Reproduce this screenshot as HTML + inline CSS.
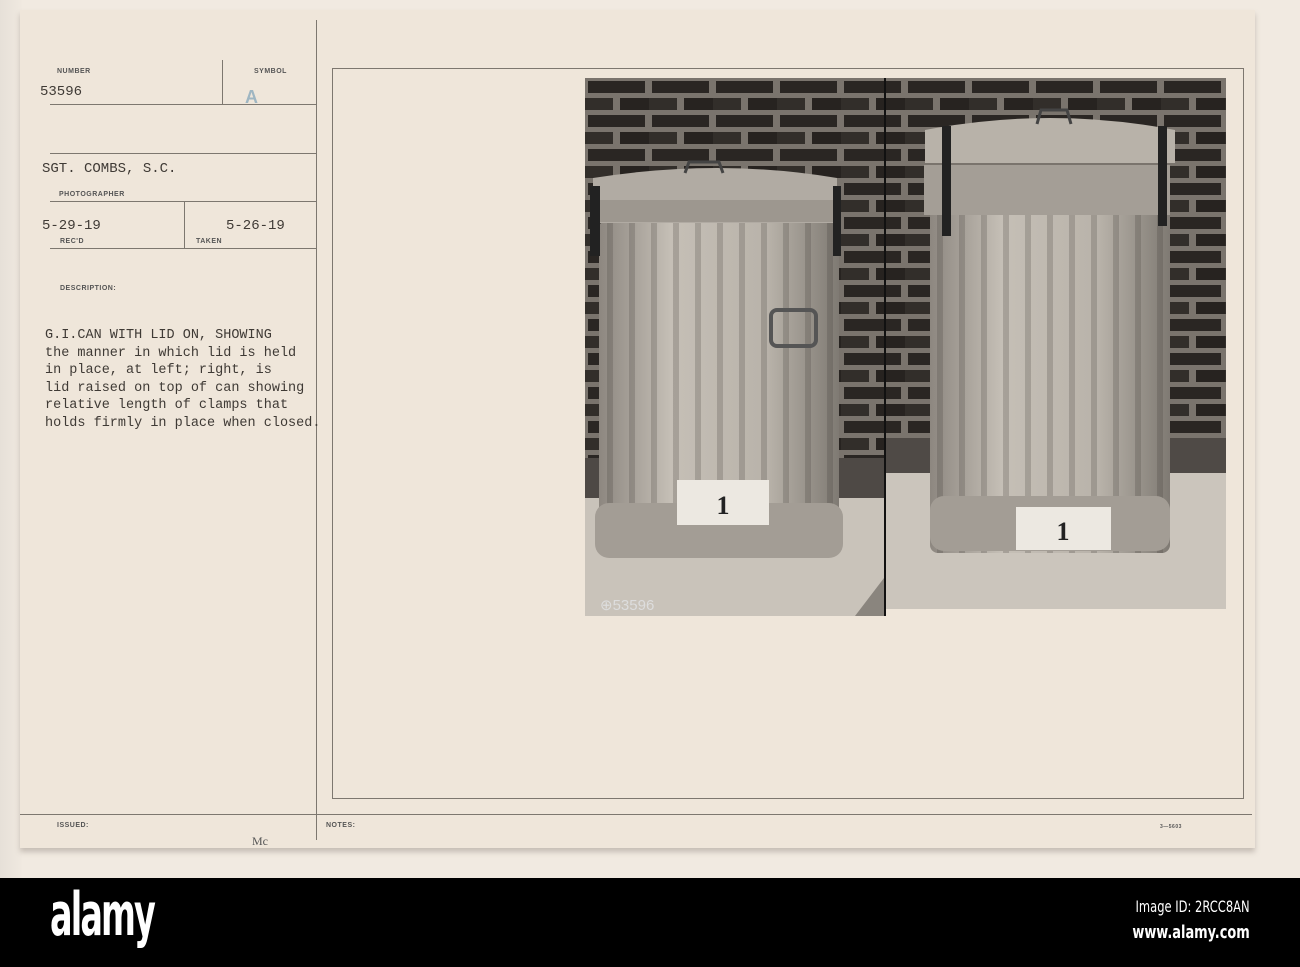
<!DOCTYPE html>
<html><head><meta charset="utf-8"><style>
body{margin:0;width:1300px;height:967px;overflow:hidden;background:#f1eae1;font-family:"Liberation Mono",monospace;color:#4a4540;position:relative}
.a{position:absolute}
.l{position:absolute;background:#7d776f}
.sm{font-family:"Liberation Sans",sans-serif;font-size:7px;font-weight:bold;letter-spacing:.5px;color:#555}
.ty{font-size:14px;color:#3f3a35}
.desc{font-size:13.5px;line-height:17.5px;color:#3f3a35;white-space:pre}
</style></head><body>
<div class="a" style="left:0;top:0;width:22px;height:878px;background:linear-gradient(90deg,#e6e0d8,#f0e9e0)"></div>
<div class="a" style="left:20px;top:10px;width:1235px;height:838px;background:#efe6da;box-shadow:0 4px 5px rgba(120,110,100,.35)"></div>
<div class="l" style="left:316px;top:20px;width:1px;height:820px"></div>
<div class="l" style="left:222px;top:60px;width:1px;height:44px"></div>
<div class="l" style="left:50px;top:104px;width:267px;height:1px"></div>
<div class="l" style="left:50px;top:153px;width:267px;height:1px"></div>
<div class="l" style="left:50px;top:201px;width:267px;height:1px"></div>
<div class="l" style="left:184px;top:202px;width:1px;height:46px"></div>
<div class="l" style="left:50px;top:248px;width:267px;height:1px"></div>
<div class="l" style="left:20px;top:814px;width:1232px;height:1px"></div>
<div class="a" style="left:332px;top:68px;width:910px;height:729px;border:1px solid #7d776f"></div>
<div class="a sm" style="left:57px;top:68px">NUMBER</div>
<div class="a ty" style="left:40px;top:84px">53596</div>
<div class="a sm" style="left:254px;top:68px">SYMBOL</div>
<div class="a" style="left:245px;top:87px;font:bold 18px 'Liberation Sans',sans-serif;color:#9fb6c2">A</div>
<div class="a ty" style="left:42px;top:161px">SGT. COMBS, S.C.</div>
<div class="a sm" style="left:59px;top:191px">PHOTOGRAPHER</div>
<div class="a ty" style="left:42px;top:218px">5-29-19</div>
<div class="a sm" style="left:60px;top:238px">REC'D</div>
<div class="a ty" style="left:226px;top:218px">5-26-19</div>
<div class="a sm" style="left:196px;top:238px">TAKEN</div>
<div class="a sm" style="left:60px;top:285px">DESCRIPTION:</div>
<div class="a desc" style="left:45px;top:327px">G.I.CAN WITH LID ON, SHOWING
the manner in which lid is held
in place, at left; right, is
lid raised on top of can showing
relative length of clamps that
holds firmly in place when closed.</div>
<div class="a sm" style="left:57px;top:822px">ISSUED:</div>
<div class="a sm" style="left:326px;top:822px">NOTES:</div>
<div class="a" style="left:252px;top:834px;font:12px 'Liberation Serif',serif;color:#555">Mc</div>
<div class="a sm" style="left:1160px;top:824px;font-size:5px">3—5603</div>
<svg class="a" style="left:585px;top:78px" width="641" height="538" viewBox="0 0 641 538">
<defs>
<pattern id="br" width="64" height="34" patternUnits="userSpaceOnUse">
<rect width="64" height="34" fill="#7a746d"/>
<rect x="3" y="3" width="57" height="12" fill="#2a2623"/>
<rect x="-29" y="20" width="57" height="12" fill="#322e2a"/>
<rect x="35" y="20" width="57" height="12" fill="#272320"/>
</pattern>
<linearGradient id="cg" x1="0" x2="1"><stop offset="0" stop-color="#8d8780"/><stop offset=".3" stop-color="#c5bfb6"/><stop offset=".7" stop-color="#b9b3aa"/><stop offset="1" stop-color="#7f7a73"/></linearGradient>
<pattern id="rib" width="22" height="10" patternUnits="userSpaceOnUse"><rect x="0" width="6" height="10" fill="rgba(60,55,50,.22)"/></pattern>
</defs>
<rect width="299" height="538" fill="url(#br)"/>
<rect x="301" width="340" height="531" fill="url(#br)"/>
<rect x="0" y="380" width="299" height="60" fill="#4e4945"/>
<rect x="0" y="420" width="299" height="118" fill="#c9c3ba"/>
<polygon points="270,538 299,500 299,538" fill="#8a857e"/>
<rect x="301" y="360" width="340" height="60" fill="#4f4a46"/>
<rect x="301" y="395" width="340" height="136" fill="#cbc5bc"/>
<rect x="299" width="2" height="538" fill="#111"/>
<rect x="14" y="142" width="240" height="335" rx="8" fill="url(#cg)"/>
<rect x="14" y="142" width="240" height="335" fill="url(#rib)"/>
<rect x="10" y="425" width="248" height="55" rx="14" fill="#a39d95"/>
<path d="M8,100 Q134,80 252,100 L252,145 L8,145Z" fill="#b1aba3"/>
<rect x="8" y="122" width="244" height="22" fill="#9d978f"/>
<rect x="5" y="108" width="10" height="70" fill="#222"/>
<rect x="248" y="108" width="8" height="70" fill="#222"/>
<path d="M100,95 L104,84 L134,84 L138,95" stroke="#444" stroke-width="3" fill="none"/>
<rect x="186" y="232" width="45" height="36" rx="6" stroke="#555" stroke-width="4" fill="none"/>
<rect x="92" y="402" width="92" height="45" fill="#ece8e1"/>
<text x="138" y="436" font-family="Liberation Serif" font-weight="bold" font-size="26" text-anchor="middle" fill="#222">1</text>
<text x="15" y="532" font-family="Liberation Sans" font-size="15" fill="#ddd">⊕53596</text>
<rect x="345" y="130" width="240" height="345" rx="8" fill="url(#cg)"/>
<rect x="345" y="130" width="240" height="345" fill="url(#rib)"/>
<rect x="345" y="418" width="240" height="55" rx="14" fill="#a39d95"/>
<rect x="339" y="87" width="246" height="50" fill="#a49e96"/>
<path d="M340,52 Q465,28 590,52 L590,85 L340,85Z" fill="#b8b2a9"/>
<rect x="357" y="48" width="9" height="110" fill="#222"/>
<rect x="573" y="48" width="9" height="100" fill="#222"/>
<path d="M452,46 L456,32 L482,32 L486,46" stroke="#444" stroke-width="3" fill="none"/>
<rect x="431" y="429" width="95" height="43" fill="#ece8e1"/>
<text x="478" y="462" font-family="Liberation Serif" font-weight="bold" font-size="26" text-anchor="middle" fill="#222">1</text>
</svg>
<div class="a" style="left:0;top:878px;width:1300px;height:89px;background:#000"></div>
<div class="a" style="left:50px;top:880px;font:bold 60px 'DejaVu Sans Condensed','Liberation Sans Narrow',sans-serif;color:#fff;letter-spacing:-3px;transform:scaleX(.62);transform-origin:left">alamy</div>
<div class="a" style="right:50px;top:897px;font:16px 'DejaVu Sans Condensed','Liberation Sans Narrow',sans-serif;color:#fff;transform:scaleX(.8);transform-origin:right">Image ID: 2RCC8AN</div>
<div class="a" style="right:50px;top:922px;font:bold 18px 'DejaVu Sans Condensed','Liberation Sans Narrow',sans-serif;color:#fff;transform:scaleX(.8);transform-origin:right">www.alamy.com</div>
</body></html>
